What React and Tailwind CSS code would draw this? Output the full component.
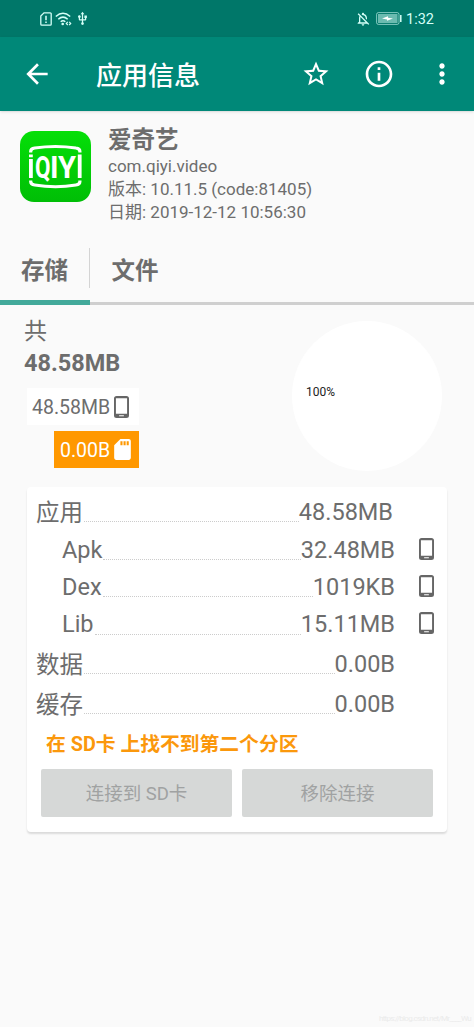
import React from 'react';
import { MdArrowBack, MdStarBorder, MdInfoOutline, MdMoreVert, MdSdCard, MdUsb, MdOutlineNotificationsOff } from 'react-icons/md';

const rows = [
    { name: '应用', size: '48.58MB', row: 'h-[40px] pl-[9px] pr-[54px] pt-[2px]', line: 'h-[17px]', label: 'pt-[2px]', phone: false },
    { name: 'Apk', size: '32.48MB', row: 'h-[37px] pl-[35px] pr-[13px]', line: 'h-[19px]', label: '', phone: true },
    { name: 'Dex', size: '1019KB', row: 'h-[37px] pl-[35px] pr-[13px]', line: 'h-[19px]', label: '', phone: true },
    { name: 'Lib', size: '15.11MB', row: 'h-[38px] pl-[35px] pr-[13px]', line: 'h-[19px]', label: '', phone: true },
    { name: '数据', size: '0.00B', row: 'h-[40px] pl-[9px] pr-[52px] pt-[2px]', line: 'h-[17px]', label: 'pt-[2px]', phone: false },
    { name: '缓存', size: '0.00B', row: 'h-[40px] pl-[9px] pr-[52px] pt-[2px]', line: 'h-[17px]', label: 'pt-[2px]', phone: false },
];

function PhoneIcon() {
    return (
        <svg width="15" height="22" viewBox="0 0 14 22" preserveAspectRatio="none" className="shrink-0 text-[#666]">
            <path
                fill="currentColor"
                fillRule="evenodd"
                d="M2.5 0h9A2.5 2.5 0 0 1 14 2.5v17a2.5 2.5 0 0 1-2.5 2.5h-9A2.5 2.5 0 0 1 0 19.5v-17A2.5 2.5 0 0 1 2.5 0zM1.8 2.3v15.4h10.4V2.3zM4.8 19.3v1h4.4v-1z"
            />
        </svg>
    );
}

function StatusBar() {
    return (
        <div className="h-[37px] bg-[#007769] flex items-center justify-between pl-10 pr-[40px] text-[#d5fff8]">
            <div className="flex items-center">
                <svg width="12" height="14" viewBox="0 0 12 14" fill="none" stroke="currentColor" strokeWidth="1.3">
                    <path d="M4 .8h6.2a1 1 0 0 1 1 1v10.4a1 1 0 0 1-1 1H1.8a1 1 0 0 1-1-1V4z" />
                    <path d="M6 3.7v4.5M6 9.5v1.5" strokeWidth="1.5" />
                </svg>
                <svg width="17" height="14" viewBox="0 0 17 14" className="ml-[3px]" fill="none" stroke="currentColor" strokeWidth="1.5">
                    <path d="M.8 4.5q7.2-6.4 14.4 0M3.3 7.2q4.7-4.2 9.4 0M5.7 9.7q2.3-2 4.6 0" />
                    <circle cx="7.7" cy="12" r="1.3" fill="currentColor" stroke="none" />
                    <path d="M12.8 9.8l-1.5 1.6 1.5 1.6M14.2 9.8l1.5 1.6-1.5 1.6" strokeWidth="1.2" />
                </svg>
                <MdUsb size={15} className="ml-[3px]" />
            </div>
            <div className="flex items-center">
                <MdOutlineNotificationsOff size={16} />
                <svg width="26" height="13" viewBox="0 0 26 13" className="ml-[5px]">
                    <rect x=".6" y=".6" width="22.4" height="11.8" rx="1.8" fill="none" stroke="currentColor" strokeOpacity=".6" />
                    <rect x="2" y="2" width="19.5" height="9" fill="currentColor" fillOpacity=".5" />
                    <path d="M6 6.5l6-2.2v1.4l5 .8-6 2.3V7.4z" fill="#fff" />
                    <path d="M24.8 3v7" stroke="currentColor" strokeWidth="1.5" />
                </svg>
                <span className="ml-1 pt-[2px] text-[14.5px] leading-[18px]">1:32</span>
            </div>
        </div>
    );
}

function AppLogo() {
    return (
        <svg width="71" height="71" viewBox="0 0 71 71" className="shrink-0">
            <defs>
                <linearGradient id="logoGreen" x1="0" y1="0" x2="0" y2="1">
                    <stop offset="0" stopColor="#05df08" />
                    <stop offset="1" stopColor="#00be06" />
                </linearGradient>
            </defs>
            <rect width="71" height="71" rx="14" fill="url(#logoGreen)" />
            <g fill="none" stroke="#fff" strokeWidth="3.2">
                <path d="M10.7 21.5v-1q0-3 4-3.5 21-3 41.2 0 4 .5 4 3.5v1" />
                <path d="M10.7 49.5v1q0 3 4 3.5 21 3.5 41.2 0 4-.5 4-3.5v-1" />
                <path d="M10.9 23.5v2.7M10.9 28v19M59.7 23.5V47" strokeWidth="3.8" />
            </g>
            <g fill="#fff" className="font-[Roboto] text-[32px] font-bold">
                <text x="15" y="46.5" textLength="15.500" lengthAdjust="spacingAndGlyphs">Q</text>
                <text x="30" y="46.5" textLength="8.500" lengthAdjust="spacingAndGlyphs">I</text>
                <text x="38" y="46.5" textLength="18" lengthAdjust="spacingAndGlyphs">Y</text>
            </g>
        </svg>
    );
}

function App() {
    return (
        <div className="w-[474px] h-[1027px] bg-[#fafafa] text-[#6d6d6d] font-[Roboto,'Noto_Sans_CJK_SC',sans-serif] flex flex-col overflow-hidden">
            <StatusBar />
            <header className="h-[74px] shrink-0 bg-[#008878] text-white flex items-center pl-[21px] pr-[18px] shadow-sm">
                <MdArrowBack size={32} />
                <h1 className="ml-[43px] pt-1 text-[26px] font-medium leading-none grow">应用信息</h1>
                <MdStarBorder size={30} />
                <MdInfoOutline size={32} className="ml-[32px]" />
                <MdMoreVert size={32} className="ml-[31px] -mr-[2px]" />
            </header>

            <section className="flex pt-5 pl-5 h-[137px] shrink-0">
                <AppLogo />
                <div className="ml-[17px] -mt-[6px] text-[17px] leading-[23px]">
                    <h2 className="text-[23.5px] font-bold leading-[30px]">爱奇艺</h2>
                    <p>com.qiyi.video</p>
                    <p>版本: 10.11.5 (code:81405)</p>
                    <p>日期: 2019-12-12 10:56:30</p>
                </div>
            </section>

            <nav className="relative h-[57px] shrink-0 flex items-start text-[23.5px] font-bold border-b-[3px] border-[#cfcfcf]">
                <div className="w-[90px] h-10 pt-[7px] flex items-center justify-center border-r border-[#d4d4d4]">存储</div>
                <div className="w-[90px] h-10 pt-[7px] flex items-center justify-center">文件</div>
                <div className="absolute left-0 top-[52px] w-[90px] h-[5px] bg-[#42a99a]" />
            </nav>

            <section className="flex justify-between pl-6 pr-8 pt-[13px] h-[182px] shrink-0">
                <div className="w-[115px] flex flex-col items-end">
                    <div className="w-full text-[23px] leading-[26px] pt-px">共</div>
                    <div className="w-full text-[23.5px] font-bold leading-[32px] mt-[2px]">48.58MB</div>
                    <div className="mt-[9px] w-[112px] h-[37px] shrink-0 bg-white flex items-center text-[19.5px] pl-[5px]">
                        <span className="w-[79px] pt-[3px]">48.58MB</span>
                        <span className="ml-[3px]"><PhoneIcon /></span>
                    </div>
                    <div className="mt-[6px] w-[85px] h-[37px] shrink-0 bg-[#ff9800] text-white flex items-center text-[19.5px] pl-[6px]">
                        <span className="w-[50px] pt-[3px]">0.00B</span>
                        <MdSdCard size={25} className="mb-px shrink-0" />
                    </div>
                </div>
                <div className="mt-[3px] size-[150px] rounded-full bg-white flex items-center pl-[14px] text-[12px] text-[#222]">
                    <span className="-mt-2">100%</span>
                </div>
            </section>

            <section className="ml-[27px] mr-[27px] h-[345px] shrink-0 bg-white rounded-sm shadow-[0_2px_2px_#00000020] pt-[5px]">
                {rows.map((r) => (
                    <div key={r.name} className={`flex items-center text-[23.5px] ${r.row}`}>
                        <span className={r.label}>{r.name}</span>
                        <span className={`grow ml-px border-b border-dotted border-[#cccccc] ${r.line}`} />
                        <span>{r.size}</span>
                        {r.phone && <span className="ml-6 pb-[4px]"><PhoneIcon /></span>}
                    </div>
                ))}
                <p className="h-[38px] flex items-center pl-[19px] pt-[3px] text-[19.8px] font-bold text-[#fb980c]">在 SD卡 上找不到第二个分区</p>
                <div className="flex gap-[10px] mt-[7px] pl-[14px] text-[18.5px] text-[#a0a2a2]">
                    <button className="w-[191px] h-[48px] pt-[3px] rounded-xs bg-[#d6d8d7]">连接到 SD卡</button>
                    <button className="w-[191px] h-[48px] pt-[3px] rounded-xs bg-[#d6d8d7]">移除连接</button>
                </div>
            </section>

            <footer className="mt-auto self-end pr-[3px] pb-[2px] text-[8px] tracking-[-0.7px] leading-[12px] text-[#ebebeb]">https://blog.csdn.net/Mr____Wu</footer>
        </div>
    );
}

export default App;
